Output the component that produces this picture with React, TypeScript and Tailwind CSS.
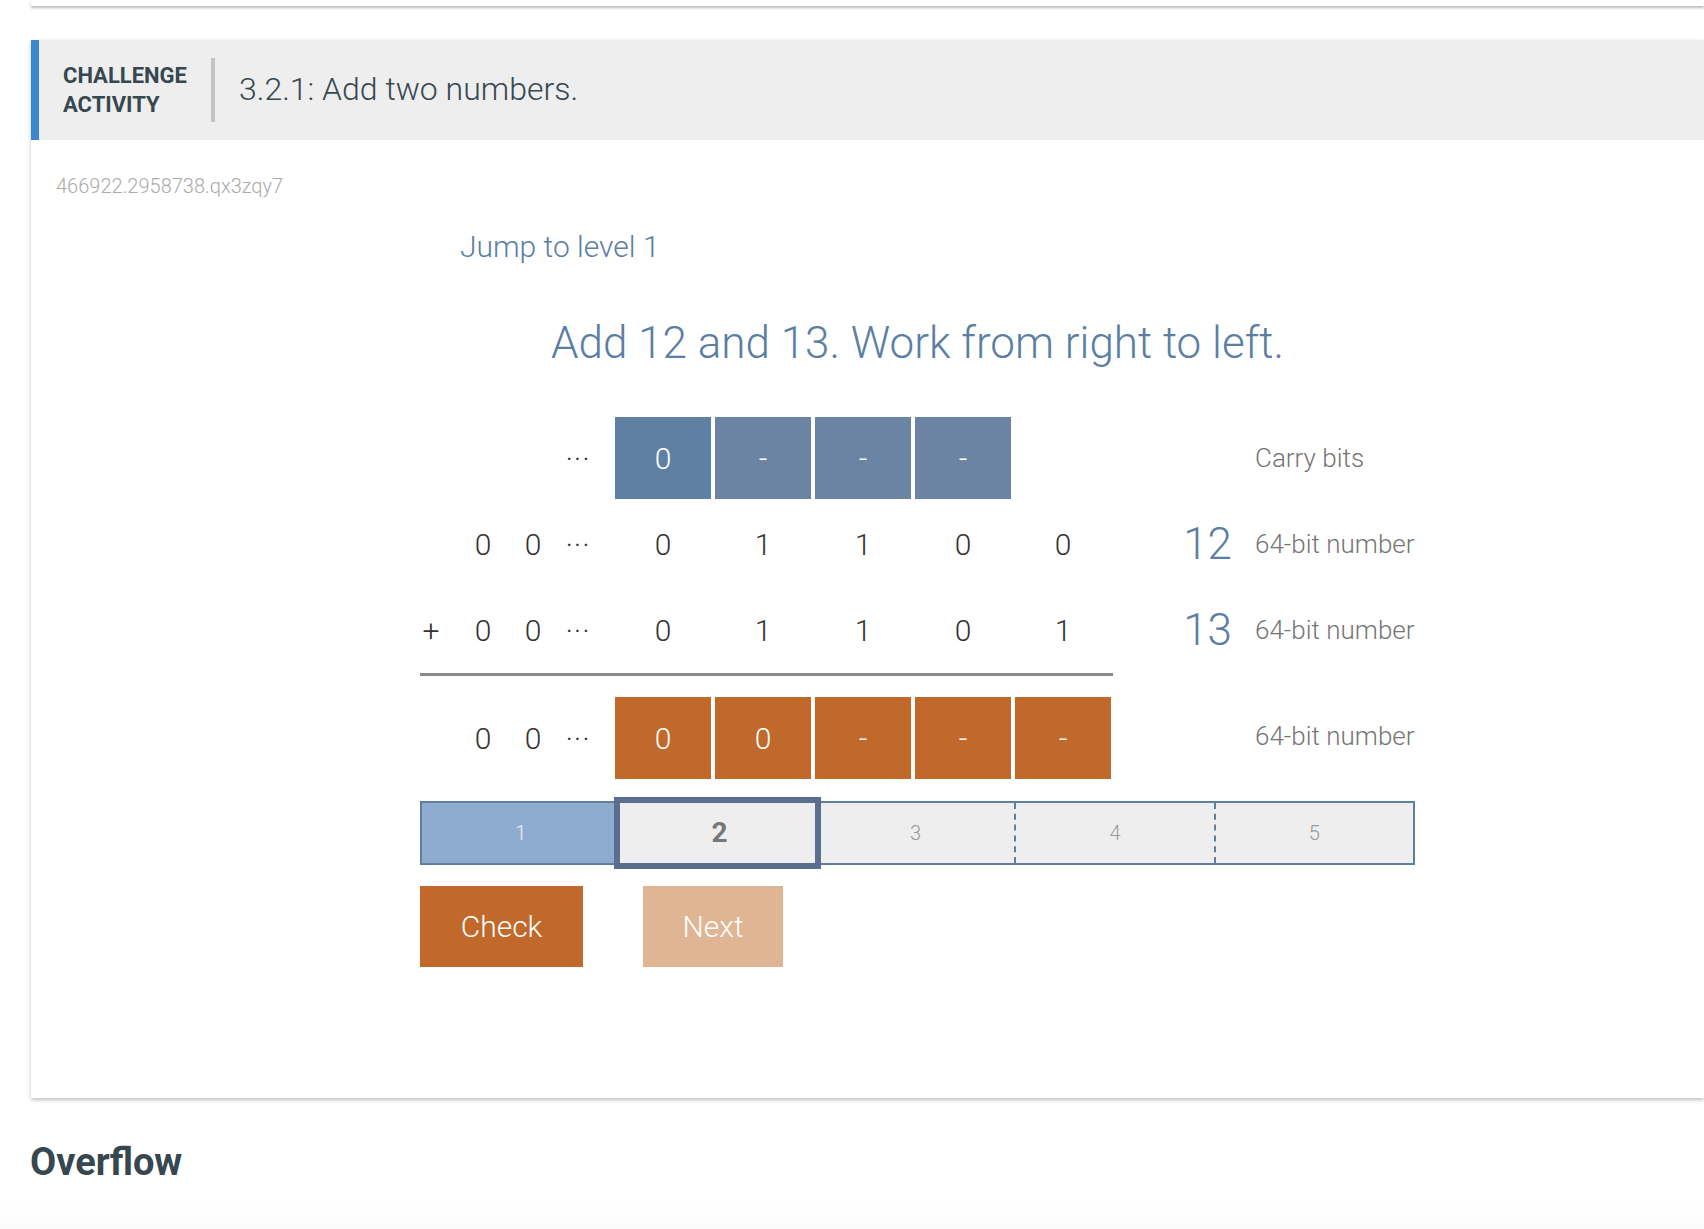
import React from "react";

const BLUE_TEXT = "text-[#5b7ea4]";

function Dots() {
  return <span className="tracking-[1px]">···</span>;
}

function LeftCells({ plus }: { plus?: boolean }) {
  return (
    <div className="flex items-center text-[30px] font-light text-[#333333]">
      <div className="w-[22px] text-center">{plus ? "+" : ""}</div>
      <div className="w-[16px]" />
      <div className="w-[50px] text-center">0</div>
      <div className="w-[50px] text-center">0</div>
      <div className="w-[40px] text-center">
        <Dots />
      </div>
      <div className="w-[17px]" />
    </div>
  );
}

function RightLabel({ num, label }: { num?: string; label: string }) {
  return (
    <div className="flex items-center">
      <div className={`w-[121px] text-right text-[44px] font-light leading-none ${BLUE_TEXT}`}>{num ?? ""}</div>
      <div className="ml-[23px] text-[26px] font-light text-[#757575]">{label}</div>
    </div>
  );
}

function DigitRow({ digits, plus, num }: { digits: string[]; plus?: boolean; num: string }) {
  return (
    <div className="flex h-[82px] items-center">
      <LeftCells plus={plus} />
      <div className="flex gap-[4px]">
        {digits.map((d, i) => (
          <div key={i} className="flex h-[82px] w-[96px] items-center justify-center text-[30px] font-light text-[#333333]">
            {d}
          </div>
        ))}
      </div>
      <RightLabel num={num} label="64-bit number" />
    </div>
  );
}

export default function App() {
  const carry = ["0", "-", "-", "-"];
  const result = ["0", "0", "-", "-", "-"];
  return (
    <div className="min-h-screen w-full overflow-hidden bg-white font-['Roboto',sans-serif]">
      {/* previous card remnant */}
      <div className="ml-[31px] h-[6px] bg-white shadow-[0_2px_3px_rgba(0,0,0,0.28)]" />

      {/* main card */}
      <div className="ml-[31px] mt-[34px] bg-white shadow-[0_2px_4px_rgba(0,0,0,0.25)]">
        <div className="flex h-[100px] items-center border-l-[8px] border-[#3d87d0] bg-[#eeeeee] pl-[24px]">
          <div className="text-[22px] font-bold uppercase leading-[29px] text-[#37474f]">
            Challenge
            <br />
            Activity
          </div>
          <div className="ml-[24px] mr-[24px] h-[64px] w-[4px] bg-[#c4c4c4]" />
          <div className="-mt-[2px] text-[32px] font-light text-[#37474f]">3.2.1: Add two numbers.</div>
        </div>

        <div className="pb-[131px] pl-[25px] pt-[34px]">
          <div className="text-[20px] font-light leading-[24px] text-[#aaaaaa]">466922.2958738.qx3zqy7</div>

          <div className="ml-[364px] w-[995px]">
            <div className={`ml-[40px] mt-[33px] text-[30px] font-light leading-[32px] ${BLUE_TEXT}`}>Jump to level 1</div>

            <div className={`mt-[54px] text-center text-[44px] font-light leading-[52px] ${BLUE_TEXT}`}>
              Add 12 and 13. Work from right to left.
            </div>

            {/* carry row */}
            <div className="mt-[48px] flex h-[82px] items-center">
              <div className="flex items-center text-[30px] font-light text-[#333333]">
                <div className="w-[138px]" />
                <div className="w-[40px] text-center">
                  <Dots />
                </div>
                <div className="w-[17px]" />
              </div>
              <div className="flex gap-[4px]">
                {carry.map((c, i) => (
                  <div
                    key={i}
                    className={`flex h-[82px] w-[96px] items-center justify-center text-[30px] font-light text-white ${
                      i === 0 ? "bg-[#5f80a3]" : "bg-[#6b84a3]"
                    }`}
                  >
                    {c}
                  </div>
                ))}
                <div className="w-[96px]" />
              </div>
              <RightLabel label="Carry bits" />
            </div>

            <div className="mt-[4px]">
              <DigitRow digits={["0", "1", "1", "0", "0"]} num="12" />
            </div>
            <div className="mt-[4px]">
              <DigitRow digits={["0", "1", "1", "0", "1"]} plus num="13" />
            </div>

            <div className="mt-[2px] h-[3px] w-[693px] bg-[#8a8a8a]" />

            {/* result row */}
            <div className="mt-[21px] flex h-[82px] items-center">
              <LeftCells />
              <div className="flex gap-[4px]">
                {result.map((c, i) => (
                  <div key={i} className="flex h-[82px] w-[96px] items-center justify-center bg-[#c0692a] text-[30px] font-light text-white">
                    {c}
                  </div>
                ))}
              </div>
              <div className="-mt-[4px]">
                <RightLabel label="64-bit number" />
              </div>
            </div>

            {/* level bar */}
            <div className="mt-[22px] flex h-[64px] border-2 border-[#5f7ea0]">
              <div className="flex flex-1 items-center justify-center bg-[#8eacd0] text-[20px] font-light text-[#f2f2f2]">1</div>
              <div className="relative flex-1 bg-[#eeeeee]">
                <div className="absolute -bottom-[6px] -left-[5px] -right-[4px] -top-[6px] flex items-center justify-center border-[6px] border-[#5a6f8f] bg-[#eeeeee] pl-[4px] text-[28px] font-bold text-[#777777]">
                  2
                </div>
              </div>
              <div className="flex flex-1 items-center justify-center bg-[#eeeeee] text-[20px] font-light text-[#999999]">3</div>
              <div className="flex flex-1 items-center justify-center border-l-2 border-dashed border-[#5f7ea0] bg-[#eeeeee] text-[20px] font-light text-[#999999]">
                4
              </div>
              <div className="flex flex-1 items-center justify-center border-l-2 border-dashed border-[#5f7ea0] bg-[#eeeeee] text-[20px] font-light text-[#999999]">
                5
              </div>
            </div>

            {/* buttons */}
            <div className="mt-[21px] flex gap-[60px]">
              <button className="h-[81px] w-[163px] bg-[#c0692a] text-[30px] font-light text-white">Check</button>
              <button className="h-[81px] w-[140px] bg-[#e0b594] text-[30px] font-light text-white">Next</button>
            </div>
          </div>
        </div>
      </div>

      <h2 className="ml-[30px] mt-[42px] text-[38px] font-bold leading-[44px] text-[#37474f]">Overflow</h2>
      <div className="mt-[20px] h-[50px] bg-gradient-to-b from-white to-[#f6f6f6]" />
    </div>
  );
}
